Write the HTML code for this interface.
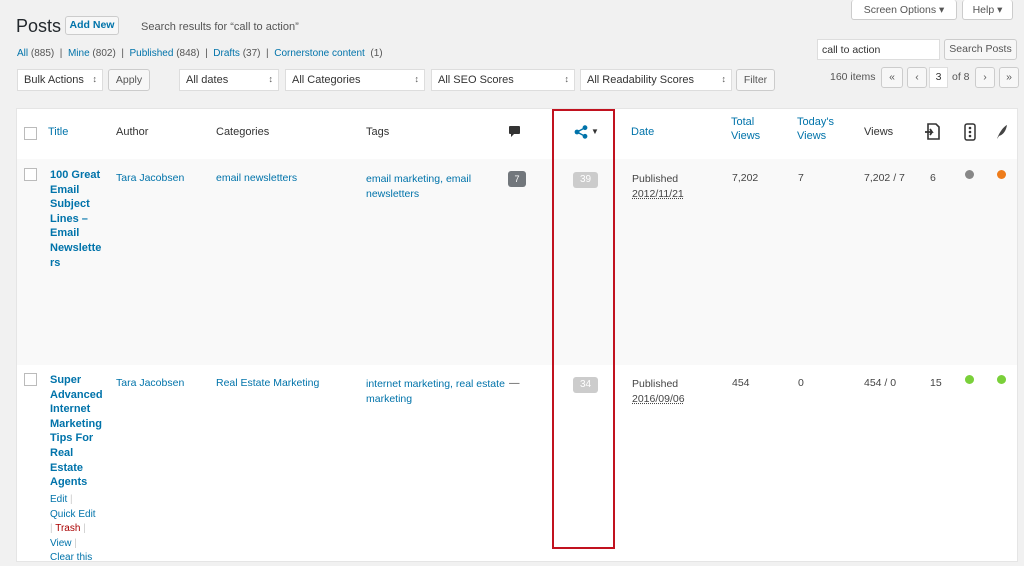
<!DOCTYPE html>
<html><head><meta charset="utf-8"><style>
*{margin:0;padding:0;box-sizing:border-box}
body{width:1024px;height:562px;overflow:hidden;background:#f1f1f1;font-family:"Liberation Sans",sans-serif;font-size:10.5px;color:#444;position:relative}
.a{position:absolute;white-space:nowrap}
.l{color:#0073aa}
.btn{position:absolute;background:#f7f7f7;border:1px solid #ccc;border-radius:3px;color:#555;font-size:10.5px;text-align:center}
.sel{position:absolute;background:#fff;border:1px solid #ddd;height:22px;padding:4px 6px;color:#333;font-size:11px}
.sel:after{content:"\2195";position:absolute;right:5px;top:4px;font-size:9px;color:#555}
.cb{position:absolute;width:13px;height:13px;border:1px solid #bbb;background:#fff}
.t{color:#0073aa;font-weight:bold;font-size:11px;line-height:14.6px;position:absolute;width:54px}
.dot{position:absolute;width:9px;height:9px;border-radius:50%}
</style></head><body>
<div class="a" style="left:16px;top:16px;font-size:18px;color:#23282d">Posts</div>
<div class="btn" style="left:65px;top:16px;width:54px;height:19px;line-height:17px;color:#0073aa;font-weight:bold;background:#f7f7f7">Add New</div>
<div class="a" style="left:141px;top:21px;font-size:11px;color:#555">Search results for “call to action”</div>
<div class="btn" style="left:851px;top:0;width:106px;height:20px;line-height:20px;background:#fff;border-top:none">Screen Options ▾</div>
<div class="btn" style="left:962px;top:0;width:51px;height:20px;line-height:20px;background:#fff;border-top:none">Help ▾</div>
<div class="a" style="left:17px;top:48px;font-size:10px;color:#555"><span class="l">All</span> (885) &nbsp;| &nbsp;<span class="l">Mine</span> (802) &nbsp;| &nbsp;<span class="l">Published</span> (848) &nbsp;| &nbsp;<span class="l">Drafts</span> (37) &nbsp;| &nbsp;<span class="l">Cornerstone content</span> &nbsp;(1)</div>
<div class="a" style="left:817px;top:39px;width:123px;height:21px;background:#fff;border:1px solid #ddd;padding:4px 4px;font-size:10.5px;color:#333">call to action</div>
<div class="btn" style="left:944px;top:39px;width:73px;height:21px;line-height:19px">Search Posts</div>
<div class="sel" style="left:17px;top:69px;width:86px">Bulk Actions</div>
<div class="btn" style="left:108px;top:69px;width:42px;height:22px;line-height:20px">Apply</div>
<div class="sel" style="left:179px;top:69px;width:100px">All dates</div>
<div class="sel" style="left:285px;top:69px;width:140px">All Categories</div>
<div class="sel" style="left:431px;top:69px;width:144px">All SEO Scores</div>
<div class="sel" style="left:580px;top:69px;width:152px">All Readability Scores</div>
<div class="btn" style="left:736px;top:69px;width:39px;height:22px;line-height:20px">Filter</div>
<div class="a" style="left:830px;top:71px;font-size:10.5px;color:#555">160 items</div>
<div class="btn" style="left:881px;top:67px;width:22px;height:21px;line-height:19px">«</div>
<div class="btn" style="left:907px;top:67px;width:20px;height:21px;line-height:19px">‹</div>
<div class="a" style="left:929px;top:67px;width:19px;height:21px;background:#fff;border:1px solid #ddd;text-align:center;line-height:19px;color:#333">3</div>
<div class="a" style="left:952px;top:71px;color:#555">of 8</div>
<div class="btn" style="left:975px;top:67px;width:20px;height:21px;line-height:19px">›</div>
<div class="btn" style="left:999px;top:67px;width:20px;height:21px;line-height:19px">»</div>

<div class="a" style="left:16px;top:108px;width:1002px;height:454px;background:#fff;border:1px solid #e5e5e5"></div>
<div class="a" style="left:17px;top:159px;width:1000px;height:206px;background:#f9f9f9"></div>

<div class="cb" style="left:24px;top:127px"></div>
<div class="a l" style="left:48px;top:126px;font-size:11px">Title</div>
<div class="a" style="left:116px;top:126px;font-size:11px;color:#333">Author</div>
<div class="a" style="left:216px;top:126px;font-size:11px;color:#333">Categories</div>
<div class="a" style="left:366px;top:126px;font-size:11px;color:#333">Tags</div>
<svg class="a" style="left:509px;top:126px" width="11" height="12" viewBox="0 0 11 12"><path d="M1 0h9a1 1 0 0 1 1 1v6a1 1 0 0 1-1 1H5l-3 3V8H1a1 1 0 0 1-1-1V1a1 1 0 0 1 1-1z" fill="#333"/></svg>
<svg class="a" style="left:574px;top:125px" width="14" height="14" viewBox="0 0 14 14"><circle cx="3" cy="7" r="2.4" fill="#0073aa"/><circle cx="11" cy="2.7" r="2.4" fill="#0073aa"/><circle cx="11" cy="11.3" r="2.4" fill="#0073aa"/><path d="M3 7L11 2.7M3 7l8 4.3" stroke="#0073aa" stroke-width="1.4"/></svg>
<div class="a" style="left:591px;top:127px;font-size:8px;color:#333">▼</div>
<div class="a l" style="left:631px;top:126px;font-size:11px">Date</div>
<div class="a l" style="left:731px;top:115px;font-size:11px;line-height:14px">Total<br>Views</div>
<div class="a l" style="left:797px;top:115px;font-size:11px;line-height:14px">Today's<br>Views</div>
<div class="a" style="left:864px;top:126px;font-size:11px;color:#333">Views</div>
<svg class="a" style="left:924px;top:123px" width="16" height="18" viewBox="0 0 16 18"><path d="M4 1h8l3 3v12H4z" fill="none" stroke="#333" stroke-width="1.6"/><path d="M1 9h7l-2-3M8 9l-2 3" fill="none" stroke="#333" stroke-width="1.8"/></svg>
<svg class="a" style="left:964px;top:123px" width="12" height="18" viewBox="0 0 12 18"><rect x="1" y="1" width="10" height="16" rx="2" fill="none" stroke="#333" stroke-width="1.5"/><circle cx="6" cy="5" r="1.3" fill="#333"/><circle cx="6" cy="9" r="1.3" fill="#333"/><circle cx="6" cy="13" r="1.3" fill="#333"/></svg>
<svg class="a" style="left:996px;top:124px" width="12" height="16" viewBox="0 0 12 16"><path d="M1 15C3 9 7 3 11 1 10 7 7 11 3 12z" fill="#444"/></svg>

<div class="a" style="left:552px;top:109px;width:63px;height:440px;border:2.5px solid #c1121f"></div>

<div class="cb" style="left:24px;top:168px"></div>
<div class="t" style="left:50px;top:168px">100 Great Email Subject Lines – Email Newslette rs</div>
<div class="a l" style="left:116px;top:172px">Tara Jacobsen</div>
<div class="a l" style="left:216px;top:172px">email newsletters</div>
<div class="a l" style="left:366px;top:172px;line-height:14.5px">email marketing, email<br>newsletters</div>
<div class="a" style="left:508px;top:171px;width:18px;height:16px;background:#72777c;border-radius:3px;color:#fff;font-size:9px;text-align:center;line-height:16px">7</div>
<div class="a" style="left:573px;top:172px;width:25px;height:16px;background:#ccc;border-radius:3px;color:#fff;font-size:10px;text-align:center;line-height:16px">39</div>
<div class="a" style="left:632px;top:172px;line-height:14.5px;color:#444">Published<br><span style="text-decoration:underline dotted">2012/11/21</span></div>
<div class="a" style="left:732px;top:172px">7,202</div>
<div class="a" style="left:798px;top:172px">7</div>
<div class="a" style="left:864px;top:172px">7,202 / 7</div>
<div class="a" style="left:930px;top:172px">6</div>
<div class="dot" style="left:965px;top:170px;background:#888"></div>
<div class="dot" style="left:997px;top:170px;background:#ee7c1b"></div>

<div class="cb" style="left:24px;top:373px"></div>
<div class="t" style="left:50px;top:373px">Super Advanced Internet Marketing Tips For Real Estate Agents</div>
<div class="a" style="left:50px;top:493px;font-size:10px;line-height:14.6px;color:#ccc"><span class="l">Edit</span> |<br><span class="l">Quick Edit</span><br>| <span style="color:#a00">Trash</span> |<br><span class="l">View</span> |<br><span class="l">Clear this</span></div>
<div class="a l" style="left:116px;top:377px">Tara Jacobsen</div>
<div class="a l" style="left:216px;top:377px">Real Estate Marketing</div>
<div class="a l" style="left:366px;top:377px;line-height:14.5px">internet marketing, real estate<br>marketing</div>
<div class="a" style="left:509px;top:377px">—</div>
<div class="a" style="left:573px;top:377px;width:25px;height:16px;background:#ccc;border-radius:3px;color:#fff;font-size:10px;text-align:center;line-height:16px">34</div>
<div class="a" style="left:632px;top:377px;line-height:14.5px">Published<br><span style="text-decoration:underline dotted">2016/09/06</span></div>
<div class="a" style="left:732px;top:377px">454</div>
<div class="a" style="left:798px;top:377px">0</div>
<div class="a" style="left:864px;top:377px">454 / 0</div>
<div class="a" style="left:930px;top:377px">15</div>
<div class="dot" style="left:965px;top:375px;background:#7ad03a"></div>
<div class="dot" style="left:997px;top:375px;background:#7ad03a"></div>
</body></html>
